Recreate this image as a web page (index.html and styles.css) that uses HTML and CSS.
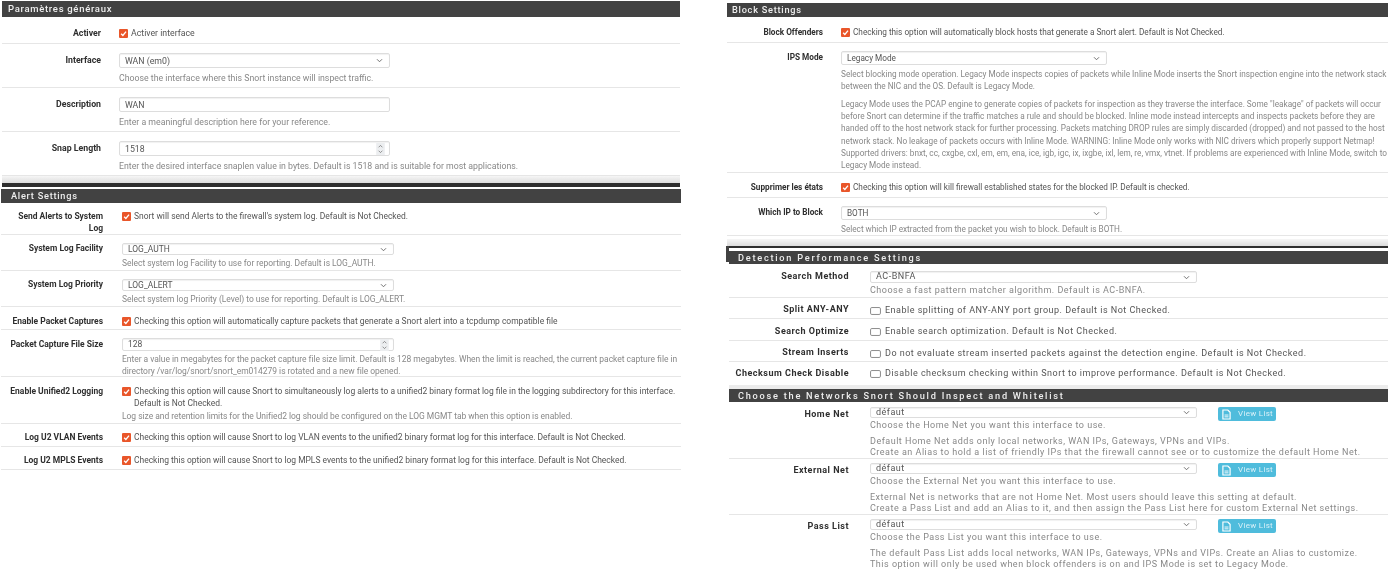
FILE: index.html
```html
<!DOCTYPE html>
<html lang="fr">
<head>
<meta charset="utf-8">
<title>Snort interface settings</title>
<link rel="stylesheet" href="styles.css">
</head>
<body>
<svg class="defs" width="0" height="0" aria-hidden="true">
  <symbol id="chev" viewBox="0 0 8 6"><path d="M1 1.5 L4 4.5 L7 1.5" fill="none" stroke="#666" stroke-width="1.1"/></symbol>
  <symbol id="chk" viewBox="0 0 10 10"><rect width="10" height="10" rx="1.2" fill="#e9562a"/><path d="M2.4 5.2 L4.3 7.2 L7.8 2.9" fill="none" stroke="#fff" stroke-width="1.5"/></symbol>
  <symbol id="unchk" viewBox="0 0 12 9" preserveAspectRatio="none"><rect x=".6" y=".6" width="10.8" height="7.8" rx="1.4" fill="#fff" stroke="#808080" stroke-width="1"/></symbol>
  <symbol id="spin" viewBox="0 0 10 14"><rect width="10" height="14" fill="#eceef0"/><path d="M2.8 5 L5 2.8 L7.2 5 M2.8 9 L5 11.2 L7.2 9" fill="none" stroke="#777" stroke-width=".9"/></symbol>
  <symbol id="file" viewBox="0 0 10 12"><path d="M1 1 H6.5 L9 3.5 V11 H1 Z" fill="none" stroke="#fff" stroke-width="1.3"/><path d="M2.8 6.6 H7.2 M2.8 8.6 H7.2" stroke="#fff" stroke-width="1"/></symbol>
</svg>

<main class="canvas">

  <section class="panel general">
    <h2 class="head">Paramètres généraux</h2>
    <div class="row"><div class="lbl">Activer</div><div class="val"><div class="chk"><svg class="box"><use href="#chk"/></svg><span>Activer interface</span></div></div></div>
    <div class="row"><div class="lbl">Interface</div><div class="val"><div class="field"><span>WAN (em0)</span><svg class="chev"><use href="#chev"/></svg></div><p class="help">Choose the interface where this Snort instance will inspect traffic.</p></div></div>
    <div class="row"><div class="lbl">Description</div><div class="val"><div class="field"><span>WAN</span></div><p class="help">Enter a meaningful description here for your reference.</p></div></div>
    <div class="row"><div class="lbl">Snap Length</div><div class="val"><div class="field"><span>1518</span><svg class="spin"><use href="#spin"/></svg></div><p class="help">Enter the desired interface snaplen value in bytes. Default is 1518 and is suitable for most applications.</p></div></div>
  </section>
  <div class="band band-general"></div>

  <section class="panel alerts">
    <h2 class="head">Alert Settings</h2>
    <div class="row"><div class="lbl">Send Alerts to System Log</div><div class="val"><div class="chk"><svg class="box"><use href="#chk"/></svg><span>Snort will send Alerts to the firewall's system log. Default is Not Checked.</span></div></div></div>
    <div class="row"><div class="lbl">System Log Facility</div><div class="val"><div class="field"><span>LOG_AUTH</span><svg class="chev"><use href="#chev"/></svg></div><p class="help">Select system log Facility to use for reporting. Default is LOG_AUTH.</p></div></div>
    <div class="row"><div class="lbl">System Log Priority</div><div class="val"><div class="field"><span>LOG_ALERT</span><svg class="chev"><use href="#chev"/></svg></div><p class="help">Select system log Priority (Level) to use for reporting. Default is LOG_ALERT.</p></div></div>
    <div class="row"><div class="lbl">Enable Packet Captures</div><div class="val"><div class="chk"><svg class="box"><use href="#chk"/></svg><span>Checking this option will automatically capture packets that generate a Snort alert into a tcpdump compatible file</span></div></div></div>
    <div class="row"><div class="lbl">Packet Capture File Size</div><div class="val"><div class="field"><span>128</span><svg class="spin"><use href="#spin"/></svg></div><p class="help">Enter a value in megabytes for the packet capture file size limit. Default is 128 megabytes. When the limit is reached, the current packet capture file in<br>directory /var/log/snort/snort_em014279 is rotated and a new file opened.</p></div></div>
    <div class="row"><div class="lbl">Enable Unified2 Logging</div><div class="val"><div class="chk"><svg class="box"><use href="#chk"/></svg><span>Checking this option will cause Snort to simultaneously log alerts to a unified2 binary format log file in the logging subdirectory for this interface.<br>Default is Not Checked.</span></div><p class="help">Log size and retention limits for the Unified2 log should be configured on the LOG MGMT tab when this option is enabled.</p></div></div>
    <div class="row"><div class="lbl">Log U2 VLAN Events</div><div class="val"><div class="chk"><svg class="box"><use href="#chk"/></svg><span>Checking this option will cause Snort to log VLAN events to the unified2 binary format log for this interface. Default is Not Checked.</span></div></div></div>
    <div class="row"><div class="lbl">Log U2 MPLS Events</div><div class="val"><div class="chk"><svg class="box"><use href="#chk"/></svg><span>Checking this option will cause Snort to log MPLS events to the unified2 binary format log for this interface. Default is Not Checked.</span></div></div></div>
  </section>

  <section class="panel block">
    <h2 class="head">Block Settings</h2>
    <div class="row"><div class="lbl">Block Offenders</div><div class="val"><div class="chk"><svg class="box"><use href="#chk"/></svg><span>Checking this option will automatically block hosts that generate a Snort alert. Default is Not Checked.</span></div></div></div>
    <div class="row"><div class="lbl">IPS Mode</div><div class="val"><div class="field"><span>Legacy Mode</span><svg class="chev"><use href="#chev"/></svg></div><p class="help">Select blocking mode operation. Legacy Mode inspects copies of packets while Inline Mode inserts the Snort inspection engine into the network stack<br>between the NIC and the OS. Default is Legacy Mode.</p><p class="help para">Legacy Mode uses the PCAP engine to generate copies of packets for inspection as they traverse the interface. Some "leakage" of packets will occur<br>before Snort can determine if the traffic matches a rule and should be blocked. Inline mode instead intercepts and inspects packets before they are<br>handed off to the host network stack for further processing. Packets matching DROP rules are simply discarded (dropped) and not passed to the host<br>network stack. No leakage of packets occurs with Inline Mode. WARNING: Inline Mode only works with NIC drivers which properly support Netmap!<br>Supported drivers: bnxt, cc, cxgbe, cxl, em, em, ena, ice, igb, igc, ix, ixgbe, ixl, lem, re, vmx, vtnet. If problems are experienced with Inline Mode, switch to<br>Legacy Mode instead.</p></div></div>
    <div class="row"><div class="lbl">Supprimer les états</div><div class="val"><div class="chk"><svg class="box"><use href="#chk"/></svg><span>Checking this option will kill firewall established states for the blocked IP. Default is checked.</span></div></div></div>
    <div class="row"><div class="lbl">Which IP to Block</div><div class="val"><div class="field"><span>BOTH</span><svg class="chev"><use href="#chev"/></svg></div><p class="help">Select which IP extracted from the packet you wish to block. Default is BOTH.</p></div></div>
  </section>
  <div class="band band-block"></div>
  <div class="notch"></div>

  <section class="panel detect">
    <h2 class="head">Detection Performance Settings</h2>
    <div class="row"><div class="lbl">Search Method</div><div class="val"><div class="field"><span>AC-BNFA</span><svg class="chev"><use href="#chev"/></svg></div><p class="help">Choose a fast pattern matcher algorithm. Default is AC-BNFA.</p></div></div>
    <div class="row"><div class="lbl">Split ANY-ANY</div><div class="val"><div class="chk"><svg class="box"><use href="#unchk"/></svg><span>Enable splitting of ANY-ANY port group. Default is Not Checked.</span></div></div></div>
    <div class="row"><div class="lbl">Search Optimize</div><div class="val"><div class="chk"><svg class="box"><use href="#unchk"/></svg><span>Enable search optimization. Default is Not Checked.</span></div></div></div>
    <div class="row"><div class="lbl">Stream Inserts</div><div class="val"><div class="chk"><svg class="box"><use href="#unchk"/></svg><span>Do not evaluate stream inserted packets against the detection engine. Default is Not Checked.</span></div></div></div>
    <div class="row"><div class="lbl">Checksum Check Disable</div><div class="val"><div class="chk"><svg class="box"><use href="#unchk"/></svg><span>Disable checksum checking within Snort to improve performance. Default is Not Checked.</span></div></div></div>
  </section>
  <div class="band-nets"></div>

  <section class="panel nets">
    <h2 class="head">Choose the Networks Snort Should Inspect and Whitelist</h2>
    <div class="row"><div class="lbl">Home Net</div><div class="val"><div class="ctl"><div class="field"><span>défaut</span><svg class="chev"><use href="#chev"/></svg></div><a class="btn"><svg class="fileicon"><use href="#file"/></svg>View List</a></div><p class="help">Choose the Home Net you want this interface to use.</p><p class="help para">Default Home Net adds only local networks, WAN IPs, Gateways, VPNs and VIPs.<br>Create an Alias to hold a list of friendly IPs that the firewall cannot see or to customize the default Home Net.</p></div></div>
    <div class="row"><div class="lbl">External Net</div><div class="val"><div class="ctl"><div class="field"><span>défaut</span><svg class="chev"><use href="#chev"/></svg></div><a class="btn"><svg class="fileicon"><use href="#file"/></svg>View List</a></div><p class="help">Choose the External Net you want this interface to use.</p><p class="help para">External Net is networks that are not Home Net. Most users should leave this setting at default.<br>Create a Pass List and add an Alias to it, and then assign the Pass List here for custom External Net settings.</p></div></div>
    <div class="row"><div class="lbl">Pass List</div><div class="val"><div class="ctl"><div class="field"><span>défaut</span><svg class="chev"><use href="#chev"/></svg></div><a class="btn"><svg class="fileicon"><use href="#file"/></svg>View List</a></div><p class="help">Choose the Pass List you want this interface to use.</p><p class="help para">The default Pass List adds local networks, WAN IPs, Gateways, VPNs and VIPs. Create an Alias to customize.<br>This option will only be used when block offenders is on and IPS Mode is set to Legacy Mode.</p></div></div>
  </section>
</main>
</body>
</html>
```

FILE: styles.css
```css
* { box-sizing: border-box; }
html, body { margin: 0; background: #fff; }
body { font-family: Roboto, "Liberation Sans", sans-serif; color: #555; }
.defs { position: absolute; }
.canvas { position: relative; width: 1388px; height: 571px; overflow: hidden; filter: blur(0.4px); }

/* The reference is a collage of pasted captures: each panel sits on a free canvas */
.panel { position: absolute; display: grid; overflow: hidden; font-size: var(--fs); letter-spacing: var(--ls, 0); }
.head { margin: 0; padding: 0 0 1px var(--hpad); background: #424242; color: #eee; font-size: var(--hfs); font-weight: 500; letter-spacing: var(--hls); display: flex; align-items: center; white-space: nowrap; }
.row { display: grid; grid-template-columns: var(--lw) 1fr; column-gap: var(--gap); border-bottom: 1px solid #e6e6e6; line-height: var(--lh); min-height: 0; }
.lbl { font-weight: 700; color: #2f2f2f; text-align: right; padding-top: var(--lt); }
.val { padding-top: var(--vt); min-width: 0; white-space: nowrap; }
.chk { display: flex; align-items: flex-start; gap: 3px; color: #555; }
.box { width: 9px; height: 9px; flex: none; margin-top: 2px; }
.field { width: var(--fw); height: var(--fh); border: 1px solid #ddd; border-radius: 2px; display: flex; align-items: center; justify-content: space-between; padding: 0 6px 0 5px; font-size: var(--fs); color: #555; box-shadow: inset 0 1px 1px rgba(0,0,0,.06); background: #fff; }
.chev { width: 7px; height: 5px; flex: none; }
.spin { width: 9px; height: 12px; flex: none; margin-right: -2px; }
.help { margin: var(--ht) 0 0; color: #888; }
.para { margin-top: var(--pt); }
.band { position: absolute; background: linear-gradient(#f6f6f6, #dcdcdc); }

.general { left: 2px; top: 1px; width: 678px; height: 175px;
  grid-template-rows: 16px 27px 44px 44px 44px;
  --fs: 8.75px; --lh: 12px; --hfs: 9.5px; --hls: .7px; --hpad: 6px; --lw: 99px; --gap: 18px; --lt: 10px; --vt: 9px; --ht: 4px; --pt: 6px; --fh: 15px; --fw: 271px; }
.general .row:nth-of-type(1) .val { padding-top: 10px; }
.band-general { left: 2px; top: 176px; width: 678px; height: 11px; border-bottom: 4px solid #2e2e2e; }

.alerts { left: 1px; top: 187px; width: 680px; height: 284px; border-top: 2px solid #fff; overflow: visible;
  grid-template-rows: 14px 32px 36px 36px 23px 47px 47px 23px 23px;
  --fs: 8.47px; --lh: 12.2px; --hfs: 9.2px; --hls: .75px; --hpad: 10px; --lw: 102px; --gap: 19px; --lt: 7px; --vt: 8px; --ht: 2px; --pt: 6px; --fh: 12px; --fw: 272px; }
.alerts .help { font-size: 8.47px; letter-spacing: -.025px; }
.alerts .row:nth-of-type(1) .lbl { padding-left: 6px; }
.alerts .row:nth-of-type(1) .val,
.alerts .row:nth-of-type(7) .val,
.alerts .row:nth-of-type(8) .val { padding-top: 7px; }
.alerts .row:nth-of-type(4) .lbl,
.alerts .row:nth-of-type(5) .lbl,
.alerts .row:nth-of-type(6) .lbl { padding-top: 8px; }
.alerts .row:nth-of-type(5) .field { height: 13px; }
.alerts .row:nth-of-type(6) .help { margin-top: .5px; }

.block { left: 727px; top: 3px; width: 661px; height: 233px;
  grid-template-rows: 14px 26px 130px 25px 38px;
  --fs: 8.23px; --lh: 12.2px; --hfs: 9.2px; --hls: .75px; --hpad: 5px; --lw: 96px; --gap: 18px; --lt: 8px; --vt: 8px; --ht: 2.5px; --pt: 6px; --fh: 14px; --fw: 266px; }
.block .row:nth-of-type(1) .lbl, .block .row:nth-of-type(1) .val { padding-top: 9px; }
.band-block { left: 727px; top: 239px; width: 661px; height: 9px; border-bottom: 2px solid #2e2e2e; }
.notch { position: absolute; left: 726px; top: 246px; width: 3px; height: 16px; background: #424242; }

.detect { left: 729px; top: 251px; width: 659px; height: 134px;
  grid-template-rows: 13px 34px 21px 22px 21px 23px;
  --fs: 9px; --ls: .5px; --lh: 11.5px; --hfs: 9.2px; --hls: 1.75px; --hpad: 9px; --lw: 120px; --gap: 21px; --lt: 7px; --vt: 7px; --ht: 2px; --pt: 5px; --fw: 327px; --fh: 12px; }
.detect .row:nth-of-type(n+2) .lbl { padding-top: 6px; }
.detect .row:nth-of-type(3) .lbl, .detect .row:nth-of-type(3) .val { padding-top: 7px; }
.detect .row:nth-of-type(5) .lbl, .detect .row:nth-of-type(5) .val { padding-top: 6px; }
.detect .box { width: 11px; height: 8px; }
.detect .chk { gap: 4px; }
.detect .row:last-child { border-bottom: 0; }
.band-nets { position: absolute; left: 729px; top: 385px; width: 659px; height: 4px; background: #ececec; }

.nets { left: 729px; top: 389px; width: 659px; height: 182px;
  grid-template-rows: 13px 57px 56px 56px;
  --fs: 9px; --ls: .5px; --lh: 10.5px; --hfs: 9.2px; --hls: 1.75px; --hpad: 9px; --lw: 120px; --gap: 21px; --lt: 6px; --vt: 4px; --ht: 2px; --pt: 5.5px; --fw: 327px; --fh: 11px; }
.nets .row:nth-of-type(1) .val { padding-top: 5px; }
.nets .row:nth-of-type(1) .lbl { padding-top: 7px; }
.nets .row:last-child { border-bottom: 0; }
.ctl { display: flex; align-items: flex-start; gap: 21px; height: 11px; }
.btn { width: 58px; height: 14px; flex: none; background: #4fbcdc; border-radius: 2px; color: #d8f0f8; display: flex; align-items: center; gap: 7px; padding-left: 4px; font-size: 8px; letter-spacing: .3px; }
.fileicon { width: 9px; height: 11px; flex: none; }
```
